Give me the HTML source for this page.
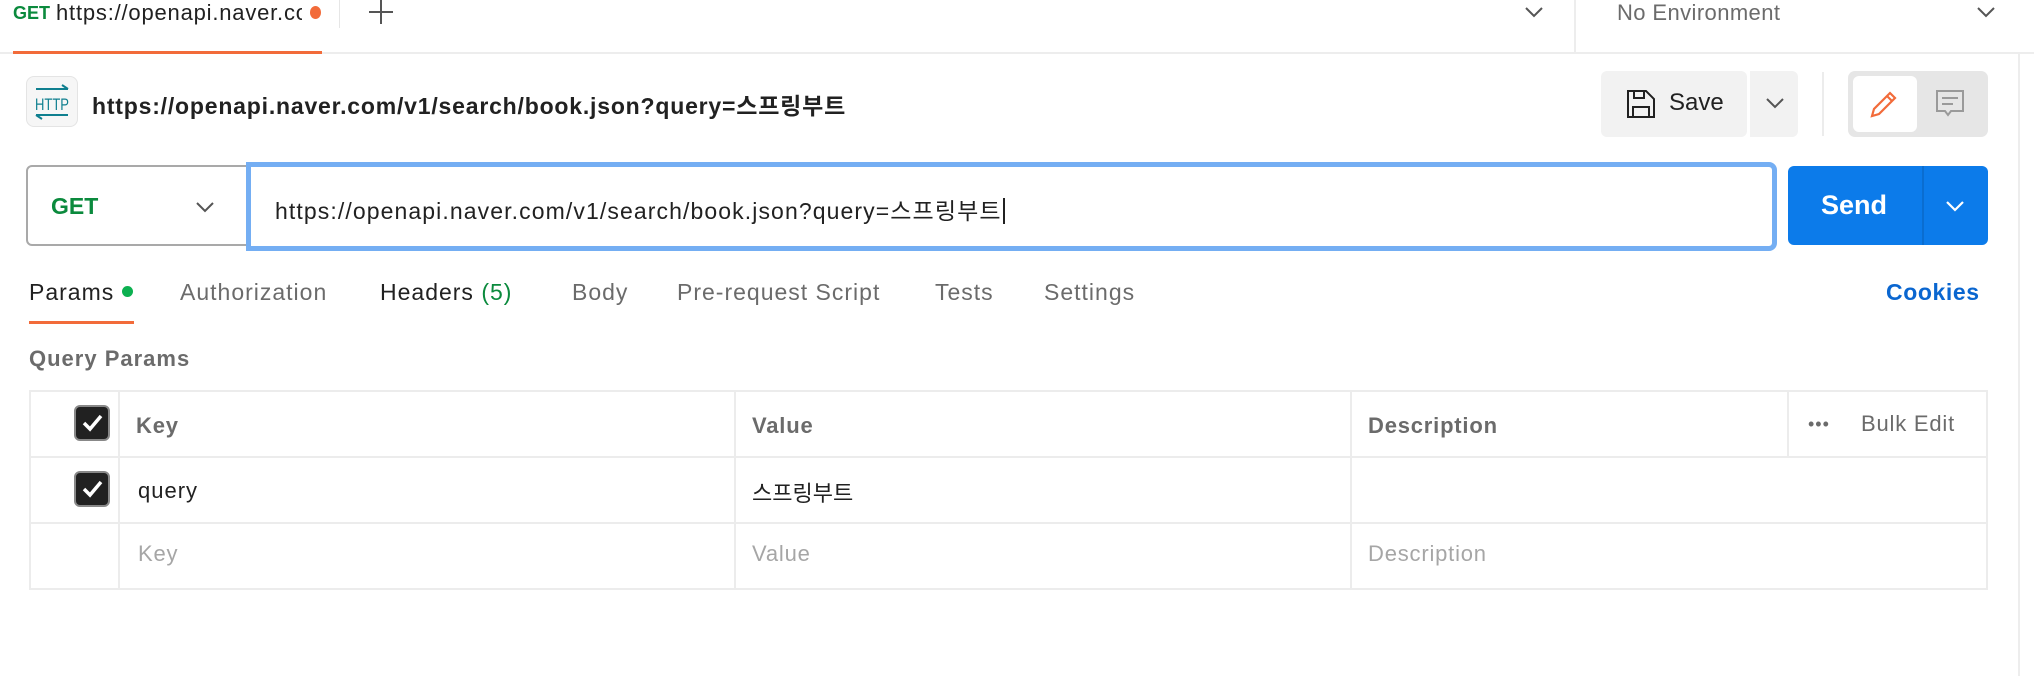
<!DOCTYPE html>
<html><head><meta charset="utf-8"><style>
*{margin:0;padding:0;box-sizing:border-box}
body{width:2034px;height:676px;background:#fff;position:relative;overflow:hidden;font-family:"Liberation Sans","Noto Sans CJK KR",sans-serif;color:#212121}
.a{position:absolute;white-space:nowrap}
.tab{font-size:23px;color:#6b6b6b;top:279px;letter-spacing:1px}
.th{font-size:22px;font-weight:bold;color:#6b6b6b;letter-spacing:0.8px}
.ph{font-size:22px;color:#a6a6a6;letter-spacing:0.8px}
.cb{position:absolute;left:74px;width:36px;height:36px;background:#212121;border:2px solid #888;border-radius:6px}
</style></head><body>
<div class="a" style="left:13px;top:3px;font-size:18px;font-weight:bold;color:#0b8a3d">GET</div>
<div class="a" style="left:56px;top:0px;font-size:22px;color:#212121;width:246px;overflow:hidden;letter-spacing:0.8px">https://openapi.naver.com</div>
<div class="a" style="left:310px;top:6px;width:11px;height:13px;border-radius:50%;background:#f26b3a"></div>
<div class="a" style="left:339px;top:0;width:1px;height:28px;background:#e6e6e6"></div>
<svg class="a" style="left:368px;top:0" width="26" height="26"><path d="M13 0V24M1 12H25" stroke="#555" stroke-width="2"/></svg>
<div class="a" style="left:0;top:52px;width:2034px;height:2px;background:#ededed"></div>
<div class="a" style="left:13px;top:51px;width:309px;height:3px;background:#f26b3a"></div>
<svg class="a" style="left:1524px;top:5px" width="20" height="14"><path d="M2 3l8 8 8-8" stroke="#555" stroke-width="2" fill="none"/></svg>
<div class="a" style="left:1574px;top:0;width:2px;height:53px;background:#ededed"></div>
<div class="a" style="left:1617px;top:0px;font-size:22px;color:#6b6b6b;letter-spacing:0.4px">No Environment</div>
<svg class="a" style="left:1976px;top:5px" width="20" height="14"><path d="M2 3l8 8 8-8" stroke="#555" stroke-width="2" fill="none"/></svg>
<div class="a" style="left:2018px;top:54px;width:2px;height:622px;background:#ededed"></div>
<div class="a" style="left:26px;top:76px;width:52px;height:51px;border:1px solid #e4e4e4;border-radius:8px;background:#f6f6f6"></div>
<svg class="a" style="left:26px;top:76px" width="52" height="51"><path d="M10 13H42M36 9l6 4" stroke="#0f7f8f" stroke-width="2" fill="none"/><text x="9" y="34" font-size="17" font-family="Liberation Sans" fill="#0f7f8f" textLength="34" lengthAdjust="spacingAndGlyphs">HTTP</text><path d="M10 39H42M10 39l6 4" stroke="#0f7f8f" stroke-width="2" fill="none"/></svg>
<div class="a" style="left:92px;top:87px;font-size:23px;font-weight:bold;color:#212121;letter-spacing:0.8px">https://openapi.naver.com/v1/search/book.json?query=스프링부트</div>
<div class="a" style="left:1601px;top:71px;width:146px;height:66px;background:#f2f2f2;border-radius:6px"></div>
<div class="a" style="left:1750px;top:71px;width:48px;height:66px;background:#f2f2f2;border-radius:0 6px 6px 0"></div>
<svg class="a" style="left:1626px;top:89px" width="30" height="30"><path d="M2 2H20L28 10V28H2Z M8 2V9H18V2 M7 28V18H23V28" stroke="#212121" stroke-width="2" fill="none"/></svg>
<div class="a" style="left:1669px;top:89px;font-size:24px;color:#212121">Save</div>
<svg class="a" style="left:1765px;top:96px" width="20" height="14"><path d="M2 3l8 8 8-8" stroke="#555" stroke-width="2" fill="none"/></svg>
<div class="a" style="left:1822px;top:72px;width:2px;height:64px;background:#ececec"></div>
<div class="a" style="left:1848px;top:71px;width:140px;height:66px;background:#e6e6e6;border-radius:7px"></div>
<div class="a" style="left:1853px;top:76px;width:64px;height:56px;background:#fff;border-radius:6px"></div>
<svg class="a" style="left:1868px;top:88px" width="32" height="32"><path d="M4 28L6 21 22 5 27 10 11 26Z M19 8l5 5" stroke="#f26b3a" stroke-width="2.2" fill="none"/></svg>
<svg class="a" style="left:1935px;top:89px" width="30" height="30"><path d="M2 2H28V22H16L13 26 10 22H2Z M7 9H23M7 15H18" stroke="#9a9a9a" stroke-width="2" fill="none"/></svg>
<div class="a" style="left:26px;top:165px;width:224px;height:81px;border:2px solid #a9a9a9;border-radius:6px 0 0 6px;background:#fff"></div>
<div class="a" style="left:51px;top:193px;font-size:23px;font-weight:bold;color:#0b8a3d">GET</div>
<svg class="a" style="left:195px;top:200px" width="20" height="14"><path d="M2 3l8 8 8-8" stroke="#555" stroke-width="2" fill="none"/></svg>
<div class="a" style="left:246px;top:162px;width:1531px;height:89px;border:5px solid #74aef3;border-radius:0 8px 8px 0;background:#fff"></div>
<div class="a" style="left:275px;top:192px;font-size:23px;color:#212121;letter-spacing:1.1px">https://openapi.naver.com/v1/search/book.json?query=스프링부트<span style="border-left:2px solid #212121;margin-left:1px"></span></div>
<div class="a" style="left:1788px;top:166px;width:200px;height:79px;background:#0c7bea;border-radius:6px"></div>
<div class="a" style="left:1922px;top:166px;width:2px;height:79px;background:#0a6dd0"></div>
<div class="a" style="left:1821px;top:190px;font-size:27px;font-weight:bold;color:#fff">Send</div>
<svg class="a" style="left:1945px;top:199px" width="20" height="14"><path d="M2 3l8 8 8-8" stroke="#fff" stroke-width="2.2" fill="none"/></svg>
<div class="a tab" style="left:29px;color:#212121">Params <span style="display:inline-block;width:11px;height:11px;border-radius:50%;background:#0cb050;vertical-align:3px"></span></div>
<div class="a" style="left:29px;top:321px;width:105px;height:3px;background:#f26b3a"></div>
<div class="a tab" style="left:180px">Authorization</div>
<div class="a tab" style="left:380px;color:#212121">Headers <span style="color:#0b8a3d">(5)</span></div>
<div class="a tab" style="left:572px">Body</div>
<div class="a tab" style="left:677px">Pre-request Script</div>
<div class="a tab" style="left:935px">Tests</div>
<div class="a tab" style="left:1044px">Settings</div>
<div class="a" style="left:1886px;top:279px;font-size:23px;font-weight:bold;color:#0a66d0;letter-spacing:0.6px">Cookies</div>
<div class="a" style="left:29px;top:346px;font-size:22px;font-weight:bold;color:#6b6b6b;letter-spacing:1px">Query Params</div>
<div class="a" style="left:29px;top:390px;width:1959px;height:200px;border:2px solid #ececec"></div>
<div class="a" style="left:29px;top:456px;width:1959px;height:2px;background:#ececec"></div>
<div class="a" style="left:29px;top:522px;width:1959px;height:2px;background:#ececec"></div>
<div class="a" style="left:118px;top:390px;width:2px;height:200px;background:#ececec"></div>
<div class="a" style="left:734px;top:390px;width:2px;height:200px;background:#ececec"></div>
<div class="a" style="left:1350px;top:390px;width:2px;height:200px;background:#ececec"></div>
<div class="a" style="left:1787px;top:390px;width:2px;height:67px;background:#ececec"></div>
<div class="cb" style="top:405px"></div>
<div class="cb" style="top:471px"></div>
<svg class="a" style="left:74px;top:405px" width="36" height="36"><path d="M10 18l6 6 11-13" stroke="#fff" stroke-width="3.5" fill="none"/></svg>
<svg class="a" style="left:74px;top:471px" width="36" height="36"><path d="M10 18l6 6 11-13" stroke="#fff" stroke-width="3.5" fill="none"/></svg>
<div class="a th" style="left:136px;top:413px">Key</div>
<div class="a th" style="left:752px;top:413px">Value</div>
<div class="a th" style="left:1368px;top:413px">Description</div>
<div class="a" style="left:1808px;top:414px;font-size:18px;color:#6b6b6b;letter-spacing:1px">•••</div>
<div class="a" style="left:1861px;top:411px;font-size:22px;color:#6b6b6b;letter-spacing:0.8px">Bulk Edit</div>
<div class="a" style="left:138px;top:478px;font-size:22px;color:#212121;letter-spacing:1px">query</div>
<div class="a" style="left:752px;top:476px;font-size:22px;color:#212121">스프링부트</div>
<div class="a ph" style="left:138px;top:541px">Key</div>
<div class="a ph" style="left:752px;top:541px">Value</div>
<div class="a ph" style="left:1368px;top:541px">Description</div>
</body></html>
